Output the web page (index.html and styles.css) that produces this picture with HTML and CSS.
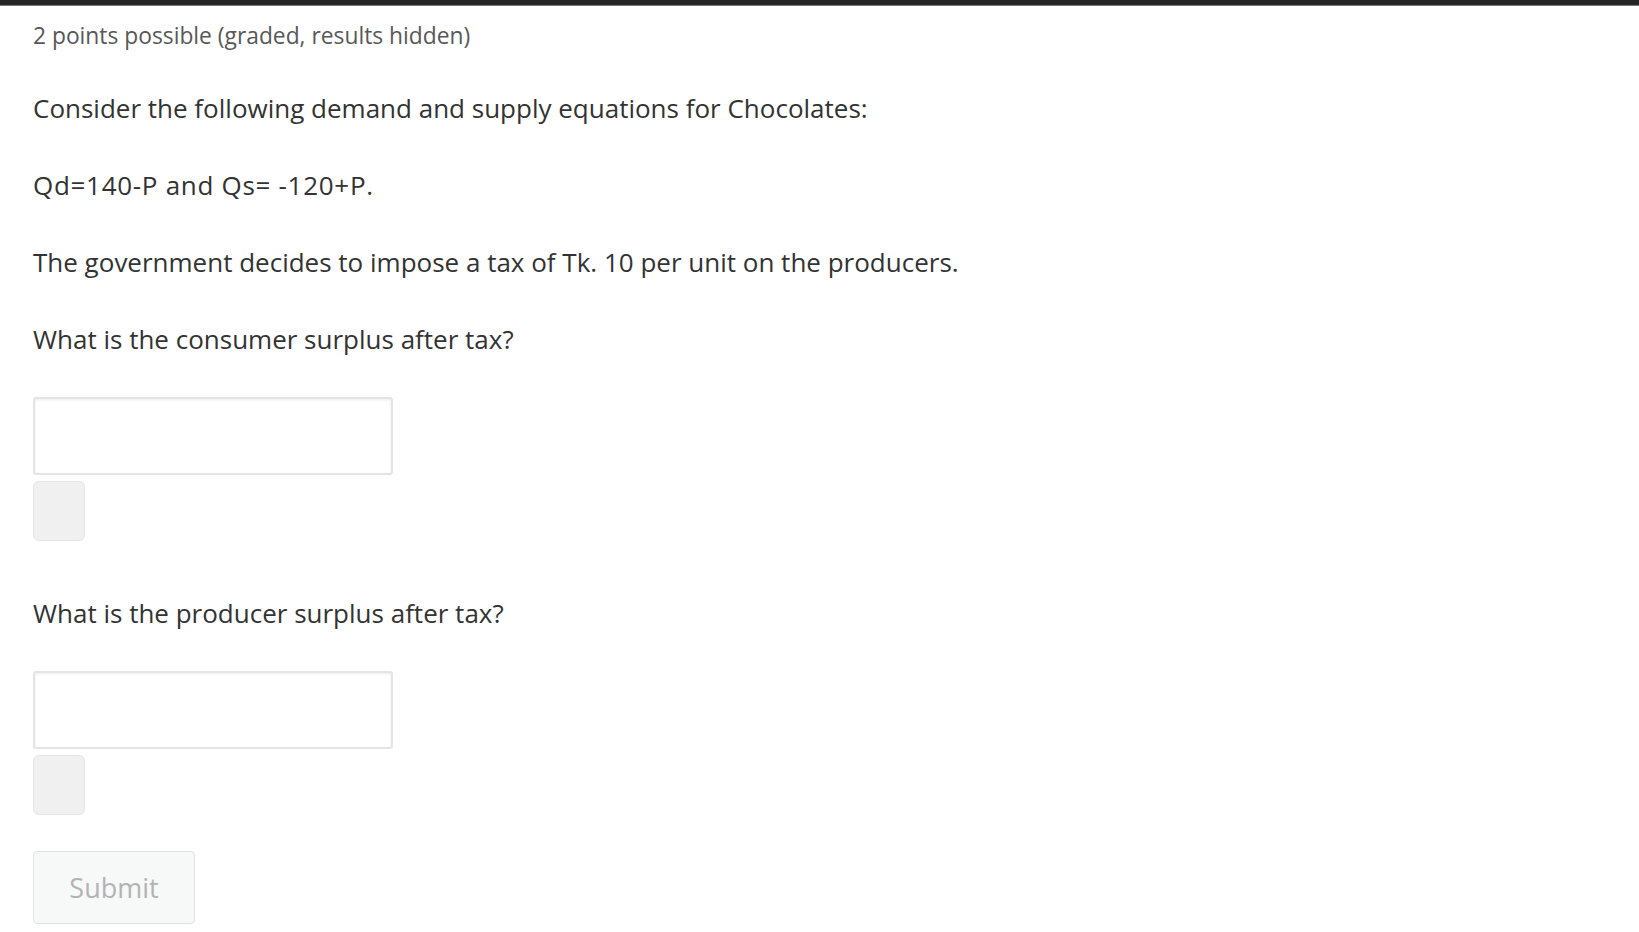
FILE: index.html
```html
<!DOCTYPE html>
<html>
<head>
<meta charset="utf-8">
<link rel="stylesheet" href="styles.css">
</head>
<body>
<div class="topbar"></div>
<div class="problem">
  <div class="points">2 points possible (graded, results hidden)</div>
  <p class="text first">Consider the following demand and supply equations for Chocolates:</p>
  <p class="text equation">Qd=140-P and Qs= -120+P.</p>
  <p class="text">The government decides to impose a tax of Tk. 10 per unit on the producers.</p>
  <p class="text">What is the consumer surplus after tax?</p>
  <div class="answer">
    <input class="field" type="text">
    <div class="status"></div>
  </div>
  <p class="text q2">What is the producer surplus after tax?</p>
  <div class="answer">
    <input class="field" type="text">
    <div class="status"></div>
  </div>
  <button class="submit" type="button">Submit</button>
</div>
</body>
</html>
```
FILE: styles.css
```css
html, body {
  margin: 0;
  padding: 0;
  background: #ffffff;
}
body {
  font-family: "Open Sans", "Noto Sans", sans-serif;
  color: #333333;
}
.topbar {
  height: 5px;
  background: #262626;
  border-bottom: 1px solid #7a7a7a;
}
.problem {
  padding: 15px 0 0 33px;
}
.points {
  font-size: 22.8px;
  line-height: 30px;
  color: #585858;
}
.text {
  margin: 0 0 39px 0;
  font-size: 26px;
  line-height: 38px;
  color: #333333;
}
.text.first {
  margin-top: 38px;
}
.text.equation {
  letter-spacing: 0.7px;
}
.answer {
  display: flex;
  flex-direction: column;
  align-items: flex-start;
  gap: 6px;
  margin-top: 1px;
  margin-bottom: 53px;
}
.field {
  box-sizing: border-box;
  width: 360px;
  height: 78px;
  margin: 0;
  border: 2px solid #e4e4e4;
  border-radius: 3px;
  background: #ffffff;
  box-shadow: inset 0 1px 3px rgba(0, 0, 0, 0.08);
}
.status {
  box-sizing: border-box;
  width: 52px;
  height: 60px;
  background: #f0f0f0;
  border: 1px solid #e4e4e4;
  border-radius: 6px;
}
.answer:last-of-type {
  margin-bottom: 36px;
}
.submit {
  box-sizing: border-box;
  width: 162px;
  height: 73px;
  margin: 0;
  padding: 0;
  font-family: "Open Sans", sans-serif;
  font-size: 27px;
  color: #b3b3b3;
  background: #f7f8f8;
  border: 1px solid #e2e2e2;
  border-radius: 4px;
}
```
